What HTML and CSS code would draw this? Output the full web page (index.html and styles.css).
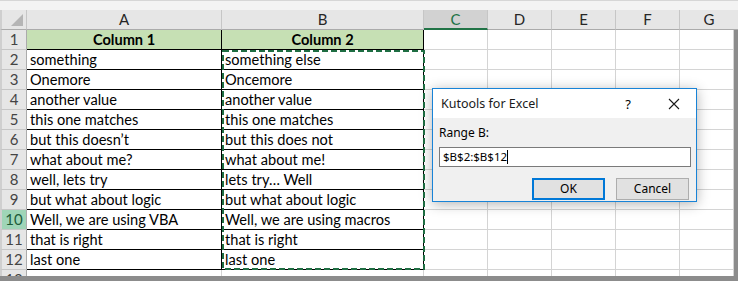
FILE: index.html
```html
<!DOCTYPE html>
<html lang="en">
<head>
    <meta charset="UTF-8">
    <title>Compare Columns</title>
    <link rel="stylesheet" href="styles.css">
</head>
<body>
    <div class="window">
        <div class="topbar"></div>
        <div class="colhead">
            <div class="corner"><span class="tri"></span></div>
            <div class="ch">A</div>
            <div class="ch">B</div>
            <div class="ch active">C</div>
            <div class="ch">D</div>
            <div class="ch">E</div>
            <div class="ch">F</div>
            <div class="ch last">G</div>
        </div>
        <div class="body">
            <div class="grid">
                <div class="rh">1</div><div class="c bk ttl">Column 1</div><div class="c bk ttl">Column 2</div><div class="c"></div><div class="c"></div><div class="c"></div><div class="c"></div><div class="c"></div>
                <div class="rh">2</div><div class="c bk">something</div><div class="c bk">something else</div><div class="c"></div><div class="c"></div><div class="c"></div><div class="c"></div><div class="c"></div>
                <div class="rh">3</div><div class="c bk">Onemore</div><div class="c bk">Oncemore</div><div class="c"></div><div class="c"></div><div class="c"></div><div class="c"></div><div class="c"></div>
                <div class="rh">4</div><div class="c bk">another value</div><div class="c bk">another value</div><div class="c"></div><div class="c"></div><div class="c"></div><div class="c"></div><div class="c"></div>
                <div class="rh">5</div><div class="c bk">this one matches</div><div class="c bk">this one matches</div><div class="c"></div><div class="c"></div><div class="c"></div><div class="c"></div><div class="c"></div>
                <div class="rh">6</div><div class="c bk">but this doesn’t</div><div class="c bk">but this does not</div><div class="c"></div><div class="c"></div><div class="c"></div><div class="c"></div><div class="c"></div>
                <div class="rh">7</div><div class="c bk">what about me?</div><div class="c bk">what about me!</div><div class="c"></div><div class="c"></div><div class="c"></div><div class="c"></div><div class="c"></div>
                <div class="rh">8</div><div class="c bk">well, lets try</div><div class="c bk">lets try… Well</div><div class="c"></div><div class="c"></div><div class="c"></div><div class="c"></div><div class="c"></div>
                <div class="rh">9</div><div class="c bk">but what about logic</div><div class="c bk">but what about logic</div><div class="c"></div><div class="c"></div><div class="c"></div><div class="c"></div><div class="c"></div>
                <div class="rh sel">10</div><div class="c bk">Well, we are using VBA</div><div class="c bk">Well, we are using macros</div><div class="c"></div><div class="c"></div><div class="c"></div><div class="c"></div><div class="c"></div>
                <div class="rh">11</div><div class="c bk">that is right</div><div class="c bk">that is right</div><div class="c"></div><div class="c"></div><div class="c"></div><div class="c"></div><div class="c"></div>
                <div class="rh">12</div><div class="c bk">last one</div><div class="c bk">last one</div><div class="c"></div><div class="c"></div><div class="c"></div><div class="c"></div><div class="c"></div>
                <div class="rh">13</div><div class="c"></div><div class="c"></div><div class="c"></div><div class="c"></div><div class="c"></div><div class="c"></div><div class="c"></div>
            </div>
            <div class="edge"></div>
        </div>

        <!-- copy marquee around B2:B12 -->
        <svg class="ants" width="203" height="220" viewBox="0 0 203 220">
            <rect x="1" y="1" width="201" height="218" fill="none" stroke="#1f6e43" stroke-width="2" stroke-dasharray="6 3"/>
        </svg>

        <div class="dialog">
            <div class="dlg-title">
                <span class="dlg-name">Kutools for Excel</span>
                <span class="dlg-help">?</span>
                <span class="dlg-close">
                    <svg width="12" height="12" viewBox="0 0 12 12"><path d="M1 1 L11 11 M11 1 L1 11" stroke="#1a1a1a" stroke-width="1.1" fill="none"/></svg>
                </span>
            </div>
            <div class="dlg-body">
                <div class="dlg-label">Range B:</div>
                <div class="dlg-input">$B$2:$B$12<span class="caret"></span></div>
                <div class="dlg-buttons">
                    <div class="btn btn-ok">OK</div>
                    <div class="btn">Cancel</div>
                </div>
            </div>
        </div>
    </div>
</body>
</html>
```

FILE: styles.css
```css
body {
    margin: 0;
    background-color: #fff;
    font-family: "Lato", "Open Sans", sans-serif;
}
.window {
    position: relative;
    width: 738px;
    height: 281px;
    background-color: #8c8c8c;
    overflow: hidden;
}
.topbar {
    height: 9px;
    background-color: #f3f3f3;
    border-top: 1px solid #d6d6d6;
}
.colhead {
    display: grid;
    grid-template-columns: 27px 195px 202px 64px 64px 64px 64px 58px;
    height: 20px;
    background-color: #e6e6e6;
}
.corner {
    position: relative;
    box-sizing: border-box;
    border-left: 2px solid #cfcfcf;
    border-right: 1px solid #c6c6c6;
    border-bottom: 1px solid #ababab;
}
.corner .tri {
    position: absolute;
    right: 3px;
    bottom: 3px;
    width: 0;
    height: 0;
    border-left: 12px solid transparent;
    border-bottom: 12px solid #b5b5b5;
}
.ch {
    box-sizing: border-box;
    border-right: 1px solid #c6c6c6;
    border-bottom: 1px solid #ababab;
    text-align: center;
    font-size: 15px;
    line-height: 19px;
    color: #262626;
}
.ch.active {
    background-color: #d2d2d2;
    color: #217346;
    border-bottom: 2px solid #217346;
    line-height: 18px;
}
.ch.last {
    border-right: none;
}
.body {
    display: flex;
    height: 246px;
    overflow: hidden;
}
.grid {
    display: grid;
    grid-template-columns: 27px 195px 202px 64px 64px 64px 64px 54px;
    grid-auto-rows: 20px;
    width: 734px;
    background-color: #fff;
    align-content: start;
}
.edge {
    width: 4px;
    background-color: #8c8c8c;
}
.rh {
    box-sizing: border-box;
    background-color: #e6e6e6;
    border-left: 2px solid #cfcfcf;
    border-right: 1px solid #ababab;
    border-bottom: 1px solid #c6c6c6;
    text-align: center;
    font-size: 15px;
    line-height: 19px;
    color: #444;
}
.rh.sel {
    background-color: #9fd5b7;
    color: #1d5c3a;
}
.c {
    box-sizing: border-box;
    border-right: 1px solid #d4d4d4;
    border-bottom: 1px solid #d4d4d4;
    padding: 0 3px;
    font-size: 14.6px;
    line-height: 20px;
    color: #000;
    white-space: nowrap;
    overflow: hidden;
}
.c.bk {
    border-right-color: #000;
    border-bottom-color: #000;
}
.c.ttl {
    background-color: #c6e0b4;
    font-weight: bold;
    text-align: center;
}
.ants {
    position: absolute;
    left: 222px;
    top: 50px;
}
.dialog {
    position: absolute;
    left: 432px;
    top: 88px;
    width: 265px;
    height: 114px;
    box-sizing: border-box;
    border: 1px solid #1883d7;
    background-color: #f0f0f0;
    box-shadow: 0 2px 12px rgba(0, 0, 0, 0.3);
    font-family: "Noto Sans", "Open Sans", sans-serif;
    font-size: 12px;
    color: #000;
}
.dlg-title {
    display: flex;
    align-items: center;
    height: 29px;
    background-color: #fff;
    padding-left: 8px;
}
.dlg-name {
    flex: 1;
    font-size: 12.5px;
    color: #1a1a1a;
}
.dlg-help {
    width: 20px;
    text-align: center;
    font-size: 13px;
    margin-right: 30px;
}
.dlg-close {
    display: flex;
    width: 12px;
    margin-right: 16px;
}
.dlg-body {
    padding: 7px 5px 0 6px;
}
.dlg-label {
    line-height: 16px;
}
.dlg-input {
    margin-top: 6px;
    height: 20px;
    box-sizing: border-box;
    border: 1px solid #7a7a7a;
    background-color: #fff;
    padding-left: 3px;
    line-height: 18px;
    font-size: 11.5px;
}
.caret {
    display: inline-block;
    width: 1px;
    height: 14px;
    background-color: #000;
    vertical-align: -3px;
}
.dlg-buttons {
    display: flex;
    justify-content: flex-end;
    gap: 11px;
    margin-top: 11px;
    padding-right: 2px;
}
.btn {
    width: 73px;
    height: 22px;
    box-sizing: border-box;
    border: 1px solid #adadad;
    background-color: #e1e1e1;
    text-align: center;
    line-height: 20px;
}
.btn-ok {
    border: 2px solid #0078d7;
    line-height: 18px;
}
```
